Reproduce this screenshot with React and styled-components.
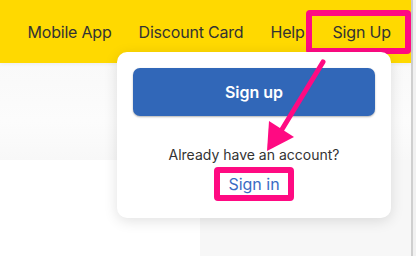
import React from "react";
import styled, { createGlobalStyle } from "styled-components";

const GlobalStyle = createGlobalStyle`
  html, body {
    margin: 0;
    padding: 0;
    width: 416px;
    height: 256px;
    overflow: hidden;
    font-family: Inter, "Noto Sans", Arial, sans-serif;
  }
  * { box-sizing: border-box; }
`;

const PINK = "#ff0a82";

export default function App() {
  return (
    <Page>
      <GlobalStyle />
      <Main>
        <Header>
          <NavItem>Mobile App</NavItem>
          <NavItem>Discount Card</NavItem>
          <NavItem>Help</NavItem>
          <NavItem $marked>Sign Up</NavItem>
        </Header>
        <Content>
          <TopBand />
          <Lower>
            <WhitePanel />
          </Lower>
        </Content>

        <Dropdown>
          <SignUpButton type="button">Sign up</SignUpButton>
          <Prompt>Already have an account?</Prompt>
          <SignInLink href="#">Sign in</SignInLink>
        </Dropdown>

        <Arrow width="416" height="256" viewBox="0 0 416 256">
          <line x1="323" y1="62" x2="281" y2="131" stroke={PINK} strokeWidth="5" strokeLinecap="round" />
          <polygon points="267,151 269,121 294,137" fill={PINK} />
        </Arrow>
      </Main>
      <ScrollStrip />
    </Page>
  );
}

const Page = styled.div`
  display: flex;
  width: 416px;
  height: 256px;
  background: #f6f6f6;
`;

const Main = styled.div`
  position: relative;
  flex: 1;
  display: flex;
  flex-direction: column;
`;

const Header = styled.header`
  height: 63px;
  flex-shrink: 0;
  display: flex;
  align-items: center;
  padding-left: 14px;
  background: #ffd900;
  box-shadow: 0 1px 4px rgba(0, 0, 0, 0.06);
  position: relative;
  z-index: 1;
`;

const NavItem = styled.span`
  position: relative;
  padding: 0 13.5px;
  font-size: 16px;
  letter-spacing: -0.2px;
  line-height: 20px;
  color: #333;
  white-space: nowrap;

  ${(p) =>
    p.$marked &&
    `
    padding-left: 14.5px;
    &::after {
      content: "";
      position: absolute;
      left: -12.5px;
      right: -7px;
      top: -12px;
      bottom: -12px;
      border: 6px solid ${PINK};
      border-radius: 4px;
    }
  `}
`;

const Content = styled.div`
  flex: 1;
  display: flex;
  flex-direction: column;
`;

const TopBand = styled.div`
  height: 97px;
  background: linear-gradient(#f9f9f9, #fcfcfc 60%, #f8f8f8);
  flex-shrink: 0;
`;

const Lower = styled.div`
  flex: 1;
  display: flex;
  background: #f7f7f7;
`;

const WhitePanel = styled.div`
  width: 200px;
  background: #ffffff;
`;

const Dropdown = styled.div`
  position: absolute;
  left: 117px;
  top: 52px;
  width: 274px;
  height: 166px;
  padding: 16px 16px 14px;
  background: #ffffff;
  border-radius: 10px;
  box-shadow: 0 3px 14px rgba(0, 0, 0, 0.12);
  display: flex;
  flex-direction: column;
  align-items: center;
  z-index: 2;
`;

const SignUpButton = styled.button`
  width: 100%;
  height: 48px;
  border: none;
  border-radius: 7px;
  background: #3167b8;
  color: #ffffff;
  font-family: inherit;
  font-size: 16px;
  font-weight: 600;
  box-shadow: 0 1px 2px rgba(0, 0, 0, 0.3);
  cursor: pointer;
`;

const Prompt = styled.p`
  margin: 29px 0 2px;
  font-size: 14px;
  line-height: 20px;
  color: #333;
`;

const SignInLink = styled.a`
  display: block;
  padding: 0 8px;
  border: 6px solid ${PINK};
  border-radius: 4px;
  font-size: 16px;
  line-height: 22px;
  color: #3a6bc4;
  text-decoration: none;
  background: #ffffff;
`;

const Arrow = styled.svg`
  position: absolute;
  left: 0;
  top: 0;
  pointer-events: none;
  z-index: 3;
`;

const ScrollStrip = styled.div`
  width: 5px;
  flex-shrink: 0;
  background: #f1f1f1;
  border-left: 2px solid #cfcfcf;
`;
